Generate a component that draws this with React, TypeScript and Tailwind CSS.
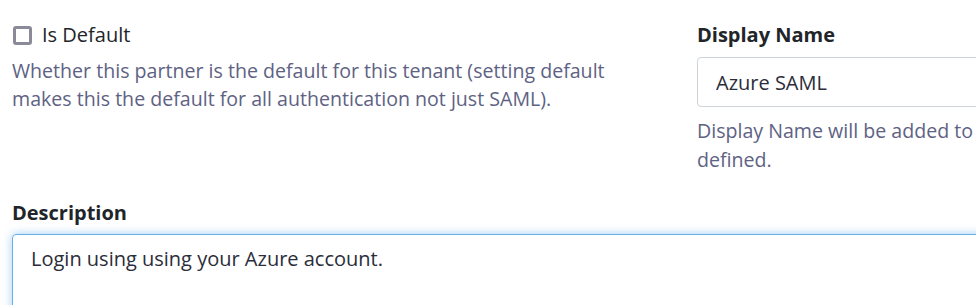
import React from 'react';

const App: React.FC = () => {
  return (
    <div className="w-[976px] h-[305px] overflow-hidden bg-white font-['Open_Sans',sans-serif] text-[20px] leading-[30px] text-[#212529]">
      <div className="w-[1400px] px-3 pt-[20px]">
        {/* Top row */}
        <div className="flex gap-6">
          {/* Is Default */}
          <div className="w-[661px]">
            <label className="flex items-center gap-[10px] h-[30px]">
              <span className="w-[19px] h-[19px] border-[3px] border-[#8a8a99] rounded-[3px] ml-px" />
              <span>Is Default</span>
            </label>
            <p className="mt-[7px] w-[630px] text-[19.6px] leading-[28px] text-[#5e6283]">
              Whether this partner is the default for this tenant (setting default makes this the default for all authentication not just SAML).
            </p>
          </div>

          {/* Display Name */}
          <div className="w-[500px]">
            <div className="font-bold">Display Name</div>
            <input
              readOnly
              defaultValue="Azure SAML"
              className="mt-[7px] w-full h-[50px] px-[18px] border border-[#ced4da] rounded-[4px] outline-none text-[#2b2d3a]"
            />
            <p className="mt-[9px] text-[19.6px] leading-[29px] text-[#5e6283] whitespace-nowrap">
              Display Name will be added to the login button if multiple providers are
              <br />
              defined.
            </p>
          </div>
        </div>

        {/* Description */}
        <div className="mt-[24px]">
          <div className="font-bold">Description</div>
          <textarea
            readOnly
            defaultValue="Login using using your Azure account."
            className="mt-[6px] w-full h-[120px] px-[18px] pt-[9px] border border-[#66afe9] rounded-[4px] outline-none resize-none text-[#2b2d3a] shadow-[0_0_10px_rgba(102,175,233,0.6)]"
          />
        </div>
      </div>
    </div>
  );
};

export default App;
